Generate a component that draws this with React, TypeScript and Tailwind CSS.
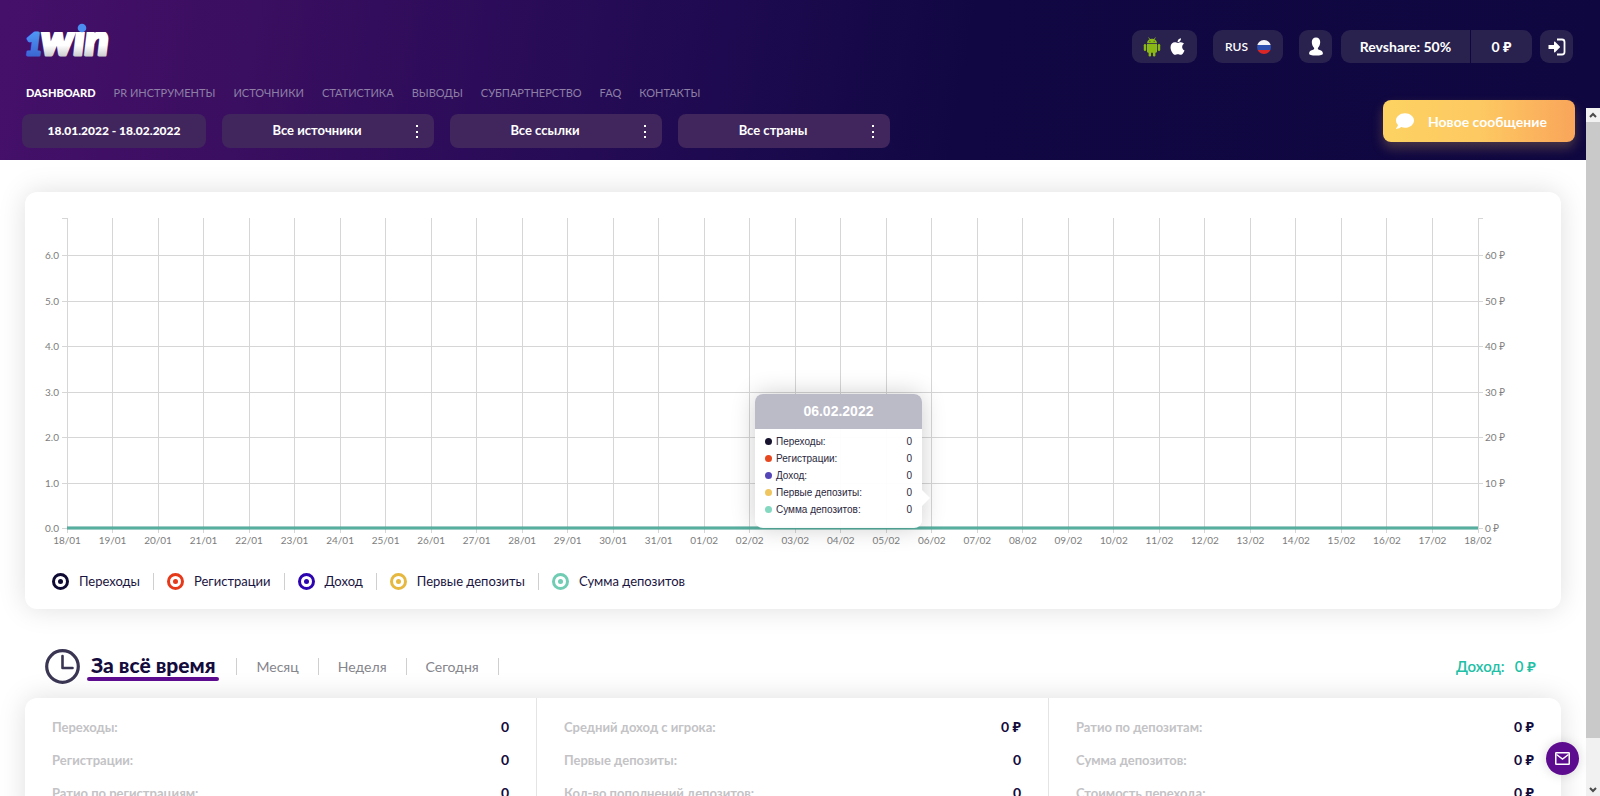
import React from 'react';
import { FaApple, FaComment } from 'react-icons/fa';

const navItems = ['PR ИНСТРУМЕНТЫ', 'ИСТОЧНИКИ', 'СТАТИСТИКА', 'ВЫВОДЫ', 'СУБПАРТНЕРСТВО', 'FAQ', 'КОНТАКТЫ'];

const filters = ['Все источники', 'Все ссылки', 'Все страны'];

const days = [
  '18/01', '19/01', '20/01', '21/01', '22/01', '23/01', '24/01', '25/01',
  '26/01', '27/01', '28/01', '29/01', '30/01', '31/01', '01/02', '02/02',
  '03/02', '04/02', '05/02', '06/02', '07/02', '08/02', '09/02', '10/02',
  '11/02', '12/02', '13/02', '14/02', '15/02', '16/02', '17/02', '18/02',
];

const series = [
  { name: 'Переходы', ring: 'border-[#0f0a33] bg-[#0f0a33]', dot: 'bg-[#17132e]' },
  { name: 'Регистрации', ring: 'border-[#e5391a] bg-[#e5391a]', dot: 'bg-[#e8481f]' },
  { name: 'Доход', ring: 'border-[#2c05b0] bg-[#2c05b0]', dot: 'bg-[#5546b8]' },
  { name: 'Первые депозиты', ring: 'border-[#e6b840] bg-[#e6b840]', dot: 'bg-[#efc55f]' },
  { name: 'Сумма депозитов', ring: 'border-[#70ccb3] bg-[#70ccb3]', dot: 'bg-[#84d8c0]' },
];

const stats = [
  [['Переходы:', '0'], ['Регистрации:', '0'], ['Ратио по регистрациям:', '0']],
  [['Средний доход с игрока:', '0 ₽'], ['Первые депозиты:', '0'], ['Кол-во пополнений депозитов:', '0']],
  [['Ратио по депозитам:', '0 ₽'], ['Сумма депозитов:', '0 ₽'], ['Стоимость перехода:', '0 ₽']],
];

const Logo = () => (
  <svg width="90" height="40" viewBox="0 0 90 40" className="overflow-visible" strokeLinejoin="round">
    <defs>
      <linearGradient id="one" x1="0" y1="10" x2="0" y2="36" gradientUnits="userSpaceOnUse">
        <stop offset="0" stopColor="#4f97f5" />
        <stop offset="1" stopColor="#3a63d0" />
      </linearGradient>
      {/* transparent above the x-height, so the ball replaces the dot of the i */}
      <linearGradient id="win" x1="0" y1="0" x2="0" y2="36" gradientUnits="userSpaceOnUse">
        <stop offset="0.27" stopColor="#ffffff" stopOpacity="0" />
        <stop offset="0.27" stopColor="#ffffff" />
        <stop offset="0.65" stopColor="#ffffff" />
        <stop offset="1" stopColor="#c4c4c8" />
      </linearGradient>
    </defs>
    <text x="-1" y="33" fontSize="30" className="font-black italic" fill="url(#one)" stroke="url(#one)" strokeWidth="3">1</text>
    <text x="15" y="33" fontSize="44" className="font-black italic" fill="url(#win)" stroke="url(#win)" strokeWidth="3">win</text>
    <circle cx="56" cy="6" r="4.300" fill="#4a8cf0" />
  </svg>
);

const AndroidIcon = () => (
  <svg width="18" height="20" viewBox="0 0 18 20" fill="#8ab814">
    <path d="M4 6.200C4.200 3.600 6.200 1.800 9 1.800s4.800 1.800 5 4.400z" />
    <path d="M5.600.5l1.500 2.200M12.400.5l-1.500 2.200" stroke="#8ab814" strokeWidth="0.800" />
    <path d="M4 7h10v7.600c0 .7-.5 1.200-1.200 1.200H5.200c-.7 0-1.200-.5-1.200-1.200z" />
    <rect x="0.800" y="7" width="2.400" height="7" rx="1.200" />
    <rect x="14.800" y="7" width="2.400" height="7" rx="1.200" />
    <rect x="5.600" y="13" width="2.500" height="6.500" rx="1.200" />
    <rect x="9.900" y="13" width="2.500" height="6.500" rx="1.200" />
    <circle cx="6.900" cy="4.300" r="0.500" fill="#29224f" />
    <circle cx="11.100" cy="4.300" r="0.500" fill="#29224f" />
  </svg>
);

const Header = () => {
  return (
    <header className="h-40 shrink-0 bg-[linear-gradient(100deg,#45106a_0%,#3a0e60_16%,#2c0c5a_30%,#1e0a50_45%,#110843_60%,#0f0740_100%)] text-white">
      <div className="flex items-start justify-between pt-[22px] pr-[27px] pl-[26px]">
        <a href="#" aria-label="1win"><Logo /></a>
        <div className="flex pt-2">
          <div className="flex h-[33px] w-[65px] items-center justify-center gap-[7px] rounded-[9px] bg-[#29224f]">
            <AndroidIcon />
            <FaApple size={19} />
          </div>
          <button className="ml-4 flex h-[33px] w-[70px] items-center justify-center gap-[9px] rounded-[9px] bg-[#29224f] text-[12px] font-semibold">
            RUS
            <svg width="14" height="14" viewBox="0 0 14 14">
              <clipPath id="flag"><circle cx="7" cy="7" r="7" /></clipPath>
              <g clipPath="url(#flag)">
                <rect width="14" height="5" fill="#f4f4f8" />
                <rect y="5" width="14" height="5" fill="#2c4fb0" />
                <rect y="10" width="14" height="4" fill="#dc2626" />
              </g>
            </svg>
          </button>
          <button aria-label="Профиль" className="ml-4 flex h-[33px] w-[33px] items-center justify-center rounded-[9px] bg-[#29224f]">
            <svg width="14" height="19" viewBox="0 0 14 19" fill="white">
              <path d="M7 0.5C9.6 0.5 11.2 2.3 11.2 5c0 2.500-1 4.700-2.300 5.900-.3 1.100.4 1.700 1.800 2.200 2 .7 3.200 1.600 3.200 3.300 0 1.300-2.500 2.100-6.900 2.100S.1 17.700.1 16.400c0-1.700 1.200-2.600 3.200-3.300 1.400-.5 2.100-1.100 1.800-2.200C3.800 9.700 2.800 7.500 2.800 5 2.800 2.300 4.400.5 7 .5z" />
            </svg>
          </button>
          <div className="ml-[9px] flex h-[33px] gap-px overflow-hidden rounded-[9px] text-[14px] font-bold">
            <span className="flex w-[129px] items-center justify-center bg-[#29224f]">Revshare: 50%</span>
            <span className="flex w-[61px] items-center justify-center bg-[#29224f]">0 ₽</span>
          </div>
          <button aria-label="Выйти" className="ml-2 flex h-[33px] w-[33px] items-center justify-center rounded-[9px] bg-[#29224f]">
            <svg width="18" height="18" viewBox="0 0 18 18" fill="white">
              <path d="M0.500 7h5.500V4.200c0-.7.700-.9 1.100-.5l4.700 4.700c.4.400.4.800 0 1.200l-4.700 4.700c-.4.400-1.100.2-1.100-.5V11H.5z" />
              <path d="M9 1.500h5a2.500 2.500 0 0 1 2.500 2.500v10a2.500 2.500 0 0 1-2.500 2.500H9" fill="none" stroke="white" strokeWidth="1.800" />
            </svg>
          </button>
        </div>
      </div>

      <div className="flex items-start justify-between pt-[21px] pr-[25px] pl-[22px]">
        <div>
          <nav className="flex gap-[18px] pl-1 text-[11px] leading-[18px] text-[#8d7fa6]">
            <a href="#" className="font-black text-white">DASHBOARD</a>
            {navItems.map((item) => (
              <a href="#" key={item}>{item}</a>
            ))}
          </nav>
          <div className="mt-3 flex gap-4 text-[13px] font-bold">
            <button className="h-[34px] w-[184px] rounded-lg bg-[#41265d] text-[12px] font-black">18.01.2022 - 18.02.2022</button>
            {filters.map((filter) => (
              <button key={filter} className="flex h-[34px] w-[212px] items-center rounded-lg bg-[#41265d] pr-[15px]">
                <span className="flex-1 pr-1">{filter}</span>
                <svg width="3" height="15" viewBox="0 0 3 15" fill="white">
                  <rect width="2" height="2" y="1" /><rect width="2" height="2" y="7" /><rect width="2" height="2" y="12" />
                </svg>
              </button>
            ))}
          </div>
        </div>
        <button className="mt-4 flex h-[42px] w-48 items-center rounded-lg bg-linear-to-r from-[#fdd262] via-[#fdc962] to-[#f9a55a] pl-[13px] text-[14px] font-bold shadow-[0_6px_12px_rgba(253,200,90,0.25)]">
          <FaComment size={18} />
          <span className="pl-[14px]">Новое сообщение</span>
        </button>
      </div>
    </header>
  );
};

const Tooltip = () => (
  <div className="absolute right-[calc(38.7%+10px)] bottom-0 w-[167px] rounded-lg bg-white/95 font-['Liberation_Sans',sans-serif] shadow-[0_0_24px_rgba(0,0,0,0.2)]">
    <div className="rounded-t-lg bg-[#bbbac7] text-center text-[14px] leading-[35px] font-bold text-white">06.02.2022</div>
    <ul className="px-[10px] pt-1 pb-[10px] text-[10px] leading-[17px] text-[#2b2840]">
      {series.map((s) => (
        <li key={s.name} className="flex items-center">
          <span className={`mr-1 size-[7px] rounded-full ${s.dot}`} />
          <span className="flex-1">{s.name}:</span>
          <span>0</span>
        </li>
      ))}
    </ul>
    <span className="absolute right-[-8px] bottom-[22px] border-y-8 border-l-8 border-y-transparent border-l-white" />
  </div>
);

const Chart = () => {
  const rows = [0, 1, 2, 3, 4, 5, 6];
  const x = (i: number) => `${(i / (days.length - 1)) * 100}%`;
  const y = (v: number) => Math.round(310 - v * 45.5);

  return (
    <div className="relative mr-[83px] ml-[42px]">
      <svg className="block h-[310px] w-full overflow-visible text-[10px]" fill="#7d7d7d">
        <g stroke="#d6d6d6" shapeRendering="crispEdges">
          {days.map((day, i) => (
            <line key={day} x1={x(i)} x2={x(i)} y1="0" y2="315" />
          ))}
          {rows.map((v) => (
            <line key={v} x1="-5" x2="100%" y1={y(v)} y2={y(v)} />
          ))}
          <line x1="-5" x2="0" y1="0" y2="0" />
        </g>
        {/* right axis ticks */}
        <svg x="100%" className="overflow-visible" stroke="#d6d6d6" shapeRendering="crispEdges">
          <line x1="0" x2="5" y1="0" y2="0" />
          {rows.map((v) => (
            <line key={v} x1="0" x2="5" y1={y(v)} y2={y(v)} />
          ))}
        </svg>
        <line x1="0" x2="100%" y1="310" y2="310" stroke="#3f9e8f" strokeWidth="3" />
        <line x1="0" x2="100%" y1="310" y2="310" stroke="#70bfae" strokeWidth="1" />
        {rows.map((v) => (
          <g key={v}>
            <text x="-8" y={y(v) + 4} textAnchor="end">{v}.0</text>
            <text x="100%" dx="7" y={y(v) + 4}>{v * 10} ₽</text>
          </g>
        ))}
        {days.map((day, i) => (
          <text key={day} x={x(i)} y="326" textAnchor="middle">{day}</text>
        ))}
      </svg>
      <Tooltip />
    </div>
  );
};

const Legend = () => (
  <div className="mt-11 ml-[27px] flex items-center text-[13px] leading-[18px] text-[#1a1440]">
    {series.map((s, i) => (
      <React.Fragment key={s.name}>
        {i > 0 && <span className="mx-[13px] h-[17px] w-px bg-[#cfcfcf]" />}
        <label className="flex items-center gap-[10px]">
          <input type="checkbox" defaultChecked className={`size-[17px] appearance-none rounded-full border-[3px] bg-clip-content p-[3px] ${s.ring}`} />
          {s.name}
        </label>
      </React.Fragment>
    ))}
  </div>
);

const Stats = () => {
  return (
    <section>
      <div className="flex h-[89px] items-center pt-[26px] pr-[25px] pl-5">
        <svg width="35" height="35" viewBox="0 0 35 35" fill="none" stroke="#3a3553">
          <circle cx="17.500" cy="17.500" r="15.800" strokeWidth="3.200" />
          <path d="M17.500 7v12h10" strokeWidth="2.600" strokeLinecap="round" strokeLinejoin="round" />
        </svg>
        <button className="ml-[7px] text-[21px] leading-6 font-black text-[#140c3c]">
          <span className="block px-1">За всё время</span>
          <span className="block h-1 rounded-sm bg-[#5e0c8f]" />
        </button>
        <div className="flex items-center text-[14px] text-[#85858c]">
          {['Месяц', 'Неделя', 'Сегодня'].map((tab) => (
            <React.Fragment key={tab}>
              <span className="mx-[19px] h-[17px] w-px bg-[#cfcfcf] first:ml-[17px]" />
              <button>{tab}</button>
            </React.Fragment>
          ))}
          <span className="ml-[19px] h-[17px] w-px bg-[#cfcfcf]" />
        </div>
        <div className="ml-auto flex gap-[10px] text-[15px] font-semibold text-[#20bfa6]">
          <span>Доход:</span>
          <span>0 ₽</span>
        </div>
      </div>
      <div className="grid grid-cols-3 divide-x divide-[#e4e4e4] rounded-xl bg-white shadow-[0_0_28px_rgba(0,0,0,0.13)]">
        {stats.map((column, i) => (
          <dl key={i} className="flex flex-col gap-[15px] px-[27px] pt-5 pb-6 text-[13px] leading-[18px] font-bold">
            {column.map(([label, value]) => (
              <div key={label} className="flex justify-between">
                <dt className="text-[#c3c3c6]">{label}</dt>
                <dd className="text-[14px] text-[#140c3c]">{value}</dd>
              </div>
            ))}
          </dl>
        ))}
      </div>
    </section>
  );
};

const Scrollbar = () => (
  <div aria-hidden="true" className="fixed top-[108px] right-0 bottom-0 flex w-[14px] flex-col items-center bg-[#f1f1f1]">
    <svg width="14" height="14" viewBox="0 0 14 14" fill="none" stroke="#4a4a4a" strokeWidth="2"><path d="M4 9l3-3 3 3" /></svg>
    <div className="w-full flex-1 bg-[#c9c9c9]" />
    <svg width="14" height="58" viewBox="0 0 14 58" fill="none" stroke="#4a4a4a" strokeWidth="2"><path d="M4 50l3 3 3-3" /></svg>
  </div>
);

export default function App() {
  return (
    <div className="flex h-screen flex-col overflow-hidden bg-white font-['Lato','Noto_Sans',sans-serif]">
      <Header />
      <main className="pt-8 pr-[39px] pl-[25px]">
        <section className="rounded-xl bg-white pt-[26px] pb-[19px] shadow-[0_0_28px_rgba(0,0,0,0.13)]">
          <Chart />
          <Legend />
        </section>
        <Stats />
      </main>
      <Scrollbar />
      <button aria-label="Написать" className="fixed right-[21px] bottom-[21px] flex size-[33px] items-center justify-center rounded-full bg-[#5e0c8f] shadow-[0_0_12px_rgba(0,0,0,0.15)]">
        <svg width="15" height="13" viewBox="0 0 15 13" fill="none" stroke="white" strokeWidth="1.500">
          <rect x="0.750" y="0.750" width="13.500" height="11.500" rx="0.500" />
          <path d="M1.500 2.500L7.500 7l6-4.500" />
        </svg>
      </button>
    </div>
  );
}
